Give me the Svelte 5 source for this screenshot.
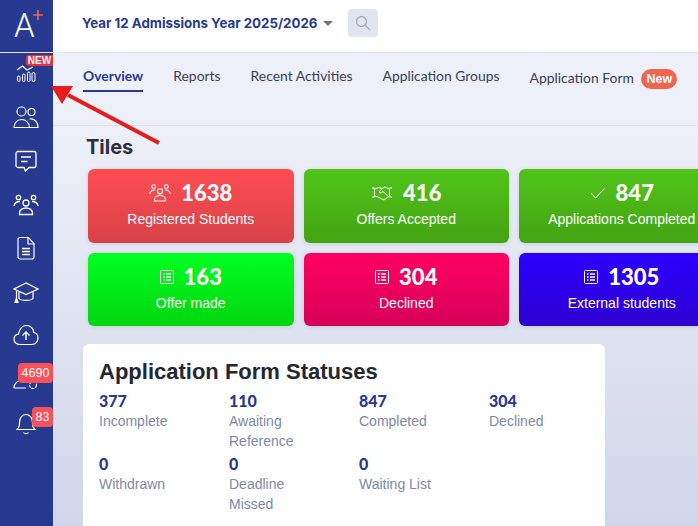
<script>
	const tiles = [
		{ icon: 'people', value: 1638, label: 'Registered Students', tone: 'red' },
		{ icon: 'hands', value: 416, label: 'Offers Accepted', tone: 'green' },
		{ icon: 'check', value: 847, label: 'Applications Completed', tone: 'green' },
		{ icon: 'list', value: 163, label: 'Offer made', tone: 'lime' },
		{ icon: 'list', value: 304, label: 'Declined', tone: 'pink' },
		{ icon: 'list', value: 1305, label: 'External students', tone: 'blue' }
	];

	const statuses = [
		{ value: 377, label: 'Incomplete' },
		{ value: 110, label: 'Awaiting Reference' },
		{ value: 847, label: 'Completed' },
		{ value: 304, label: 'Declined' },
		{ value: 0, label: 'Withdrawn' },
		{ value: 0, label: 'Deadline Missed' },
		{ value: 0, label: 'Waiting List' }
	];

	const tabs = ['Overview', 'Reports', 'Recent Activities', 'Application Groups'];
</script>

{#snippet peopleTrio(size)}
	<svg width={size} height={size} viewBox="0 0 26 26" fill="none" stroke="currentColor" stroke-width="1.3">
		<circle cx="13" cy="11" r="3" />
		<circle cx="5.500" cy="5.500" r="2.200" />
		<circle cx="20.500" cy="5.500" r="2.200" />
		<path d="M1 14c.5-3 2.500-4.500 6-4.500M25 14c-.5-3-2.500-4.500-6-4.500" />
		<path d="M6.500 22.500v-1.500c0-3 3-5 6.500-5s6.500 2 6.500 5v1.500z" />
	</svg>
{/snippet}

{#snippet listIcon()}
	<svg width="14" height="14" viewBox="0 0 14 14" fill="none" stroke="currentColor">
		<rect x="0.500" y="0.500" width="13" height="13" rx="1" />
		<path d="M3 4h1.500M6 4h5M3 7h1.500M6 7h5M3 10h1.500M6 10h5" stroke-width="1.300" />
	</svg>
{/snippet}

<div class="page">
	<aside class="sidebar">
		<div class="logo">
			<span class="logo-a">A</span>
			<svg class="logo-plus" width="10" height="10" viewBox="0 0 10 10" stroke="#ee6a50" stroke-width="1.600">
				<path d="M5 0v10M0 5h10" />
			</svg>
		</div>
		<ul class="nav">
			<li>
				<svg width="20" height="17" viewBox="0 0 20 17" fill="none" stroke="currentColor">
					<path d="M1 5 6.500 1 11 5l6-3" stroke-width="1.100" />
					<rect x="1.500" y="11" width="2.500" height="5.500" rx="1.250" />
					<rect x="6.500" y="9" width="2.500" height="7.500" rx="1.250" />
					<rect x="11.500" y="7" width="2.500" height="9.500" rx="1.250" />
					<rect x="16" y="7.500" width="3" height="9" rx="1.500" />
				</svg>
				<span class="badge new">NEW</span>
			</li>
			<li>
				<svg width="26" height="24" viewBox="0 0 26 24" fill="none" stroke="currentColor" stroke-width="1.200">
					<circle cx="8.500" cy="6.500" r="4.500" />
					<circle cx="18.500" cy="7" r="3.500" />
					<path d="M1 22.500c0-4.500 3-8 7.500-8s8 3.500 8 8z" />
					<path d="M16.500 14c5-1 8.500 3 8.500 8.500h-8" />
				</svg>
			</li>
			<li>
				<svg width="22" height="24" viewBox="0 0 22 24" fill="none" stroke="currentColor" stroke-width="1.300">
					<path d="M3 2.500h16a2 2 0 0 1 2 2v12a2 2 0 0 1-2 2h-5l-3.500 3.500-1.500-3.500H3a2 2 0 0 1-2-2v-12a2 2 0 0 1 2-2z" />
					<path d="M6 8h10M6 12.500h6.500" />
				</svg>
			</li>
			<li>{@render peopleTrio(26)}</li>
			<li>
				<svg width="18" height="24" viewBox="0 0 18 24" fill="none" stroke="currentColor" stroke-width="1.200">
					<path d="M3 1.500h8.500l5.500 6V21a2 2 0 0 1-2 2H3a2 2 0 0 1-2-2V3.500a2 2 0 0 1 2-2z" />
					<path d="M11 1.500v6.500h6" />
					<path d="M5 12.500h8M5 15.500h8M5 18.500h8" stroke-width="1.400" />
				</svg>
			</li>
			<li>
				<svg width="26" height="24" viewBox="0 0 26 24" fill="none" stroke="currentColor" stroke-width="1.200">
					<path d="M13 3 1 9l12 5.500L25 9z" />
					<path d="M6 12v6.500c2 2.500 12 2.500 14 0V12" />
					<path d="M3.500 10.500V18" />
					<path d="M3.500 18 2 22.500h3z" fill="currentColor" />
				</svg>
			</li>
			<li>
				<svg width="26" height="22" viewBox="0 0 26 22" fill="none" stroke="currentColor" stroke-width="1.200">
					<path d="M7 20.500c-3.500 0-6-2.300-6-5.300 0-2.700 2-4.700 4.500-5C6.500 5 9.500 1.500 13.500 1.500c4.300 0 7 3.300 7.300 7 2.700.5 4.200 3 4.200 5.500 0 3.500-2.500 6.500-6 6.500z" />
					<path d="M13 16V8M9.500 11.500 13 8l3.500 3.500" stroke-width="1.400" />
				</svg>
			</li>
			<li>
				<svg width="26" height="24" viewBox="0 0 26 24" fill="none" stroke="currentColor" stroke-width="1.200">
					<circle cx="10" cy="6" r="4" />
					<path d="M1 21c0-5 4-8 9-8 2.500 0 4 .5 5 1.500M1 21h12" />
					<circle cx="20" cy="18" r="3.500" stroke-dasharray="3 1" />
				</svg>
				<span class="badge count wide">4690</span>
			</li>
			<li>
				<svg width="20" height="24" viewBox="0 0 20 24" fill="none" stroke="currentColor" stroke-width="1.200">
					<path d="M1 18.500c2-1.500 2.500-3 2.500-7 0-5 3-8 6.500-8s6.500 3 6.500 8c0 4 .5 5.500 2.500 7z" />
					<path d="M7.500 21.500c1 1.500 4 1.500 5 0" />
				</svg>
				<span class="badge count">83</span>
			</li>
		</ul>
	</aside>

	<div class="content">
		<header class="topbar">
			<span class="course">Year 12 Admissions Year 2025/2026</span>
			<span class="caret"></span>
			<button class="search" aria-label="Search">
				<svg width="16" height="16" viewBox="0 0 16 16" fill="none" stroke="#a5acc0" stroke-width="1.300">
					<circle cx="6.500" cy="6.500" r="5" />
					<path d="m10.500 10.500 4.500 4.500" />
				</svg>
			</button>
		</header>

		<nav class="tabs">
			{#each tabs as tab, i}
				<span class="tab" class:active={i === 0}>{tab}</span>
			{/each}
			<span class="tab form">Application Form <em>New</em></span>
		</nav>

		<main class="main">
			<h2>Tiles</h2>
			<div class="tiles">
				{#each tiles as t}
					<div class="tile {t.tone}">
						<div class="tile-top">
							{#if t.icon === 'people'}
								{@render peopleTrio(22)}
							{:else if t.icon === 'hands'}
								<svg width="22" height="16" viewBox="0 0 22 16" fill="none" stroke="currentColor" stroke-width="1">
									<path d="M1 3h2.500v9H1M21 3h-2.500v9H21" />
									<path d="M3.500 4 8 2.500l3 1 3-1.500 4.500 2v7L13 15l-6-3-3.500-1" />
									<path d="M11 3.500 8 7c1 1.500 2.500 1 4-.5l5 4.500" />
								</svg>
							{:else if t.icon === 'check'}
								<svg width="16" height="12" viewBox="0 0 16 12" fill="none" stroke="currentColor" stroke-width="1">
									<path d="m1 6 4.500 5L15 1" />
								</svg>
							{:else}
								{@render listIcon()}
							{/if}
							<strong>{t.value}</strong>
						</div>
						<div class="tile-label">{t.label}</div>
					</div>
				{/each}
			</div>

			<section class="card">
				<h3>Application Form Statuses</h3>
				<div class="stats">
					{#each statuses as s}
						<div class="stat">
							<b>{s.value}</b>
							<span>{s.label}</span>
						</div>
					{/each}
				</div>
			</section>
		</main>
	</div>

	<svg class="arrow" width="120" height="70" viewBox="0 0 120 70">
		<path d="M109 58 18 10" stroke="#e81c1c" stroke-width="4" fill="none" />
		<path d="M1 1h22L12 19z" fill="#e81c1c" />
	</svg>
</div>

<style>
	:global(body) {
		margin: 0;
	}

	.page {
		position: relative;
		display: flex;
		width: 698px;
		height: 526px;
		overflow: hidden;
		font-family: 'Liberation Sans', sans-serif;
	}

	.sidebar {
		flex: 0 0 53px;
		background: #273a8f;
		color: #fff;
	}

	.logo {
		position: relative;
		height: 52px;
		border-bottom: 1px solid #e6e9f2;
	}

	.logo-a {
		position: absolute;
		left: 14px;
		top: 6px;
		font: 300 33px/40px Roboto, sans-serif;
	}

	.logo-plus {
		position: absolute;
		left: 33px;
		top: 10px;
	}

	.nav {
		list-style: none;
		margin: -1px 0 0;
		padding: 0;
	}

	.nav li {
		position: relative;
		display: flex;
		align-items: center;
		justify-content: center;
		height: 43.6px;
		padding-right: 1px;
	}

	.badge {
		position: absolute;
		right: 0;
		background: #f9515a;
		color: #fff;
		text-align: center;
	}

	.new {
		top: 3px;
		width: 27px;
		height: 11px;
		background: #e3303f;
		border-radius: 3px 0 0 3px;
		font-size: 10px;
		font-weight: 700;
		line-height: 11px;
	}

	.count {
		top: 6px;
		width: 21px;
		height: 20px;
		border-radius: 4px;
		font-size: 12.500px;
		line-height: 20px;
	}

	.wide {
		width: 35px;
	}

	.content {
		flex: 1;
		min-width: 0;
		display: flex;
		flex-direction: column;
	}

	.topbar {
		display: flex;
		align-items: center;
		height: 46px;
		padding: 0 0 6px 29px;
		background: #fff;
		border-bottom: 1px solid #e0e3ec;
		flex: none;
	}

	.course {
		color: #273a8f;
		font: 700 13.300px 'Inter', sans-serif;
	}

	.caret {
		margin-left: 6px;
		border: 5px solid transparent;
		border-top: 5px solid #6d7591;
		border-bottom: 0;
	}

	.search {
		margin-left: 15px;
		width: 30px;
		height: 28px;
		padding: 0;
		border: 0;
		border-radius: 4px;
		background: #e1e5ef;
		display: flex;
		align-items: center;
		justify-content: center;
	}

	.tabs {
		display: flex;
		align-items: flex-start;
		gap: 30px;
		height: 73px;
		padding-left: 30px;
		background: #edf0f8;
		border-bottom: 1px solid #dfe2ea;
		box-sizing: border-box;
		flex: none;
		white-space: nowrap;
	}

	.tab {
		margin-top: 13px;
		padding-bottom: 4px;
		color: #3a4053;
		font: 400 13.900px/20px Lato, sans-serif;
		border-bottom: 2px solid transparent;
	}

	.active {
		color: #273a8f;
		font-weight: 700;
		border-color: #273a8f;
	}

	.form {
		margin-top: 15px;
	}

	.form em {
		display: inline-block;
		margin-left: 4px;
		padding: 0 5px;
		height: 20px;
		border-radius: 10px;
		background: #ef6650;
		color: #fff;
		font: 700 12.500px/20px 'Liberation Sans', sans-serif;
	}

	.main {
		flex: 1;
		padding-left: 30px;
		background: linear-gradient(#edf0f8, #cfd4e8);
	}

	h2 {
		margin: 9px 0 10px 3px;
		color: #2b2f3b;
		font: 700 20px/24px 'Inter', sans-serif;
	}

	.tiles {
		display: grid;
		grid-template-columns: repeat(3, 205.500px);
		grid-auto-rows: 73.500px;
		gap: 10px;
		margin: 0 0 18px 5px;
	}

	.tile {
		display: flex;
		flex-direction: column;
		align-items: center;
		justify-content: center;
		padding-bottom: 4px;
		box-sizing: border-box;
		border-radius: 6px;
		color: #fff;
		box-shadow: 0 1px 4px rgba(60, 70, 120, 0.15);
	}

	.tile-top {
		display: flex;
		align-items: center;
		gap: 10px;
		height: 30px;
	}

	.tile-top strong {
		font: 900 22px/30px Lato, sans-serif;
	}

	.tile-label {
		margin-top: 1px;
		font-size: 14px;
		line-height: 20px;
	}

	.red { background: linear-gradient(#ff4d52, #d74248); }
	.green { background: linear-gradient(#50c41a, #44a313); }
	.lime { background: linear-gradient(#00ff22, #00d60e); }
	.pink { background: linear-gradient(#ff0062, #d60058); }
	.blue { background: linear-gradient(#2b00ff, #2d00cf); }

	.card {
		width: 522px;
		height: 200px;
		padding: 15px 16px;
		box-sizing: border-box;
		background: #fff;
		border-radius: 6px;
	}

	h3 {
		margin: 0 0 6px;
		color: #23272f;
		font: 700 22px/26px 'Liberation Sans', sans-serif;
	}

	.stats {
		display: grid;
		grid-template-columns: repeat(4, 130px);
		row-gap: 3px;
	}

	.stat {
		display: flex;
		flex-direction: column;
		padding-right: 40px;
	}

	.stat b {
		color: #273a8f;
		font: 900 16px/20px Lato, sans-serif;
	}

	.stat span {
		color: #8089a8;
		font-size: 14px;
		line-height: 20px;
	}

	.arrow {
		position: absolute;
		left: 50px;
		top: 85px;
	}
</style>
